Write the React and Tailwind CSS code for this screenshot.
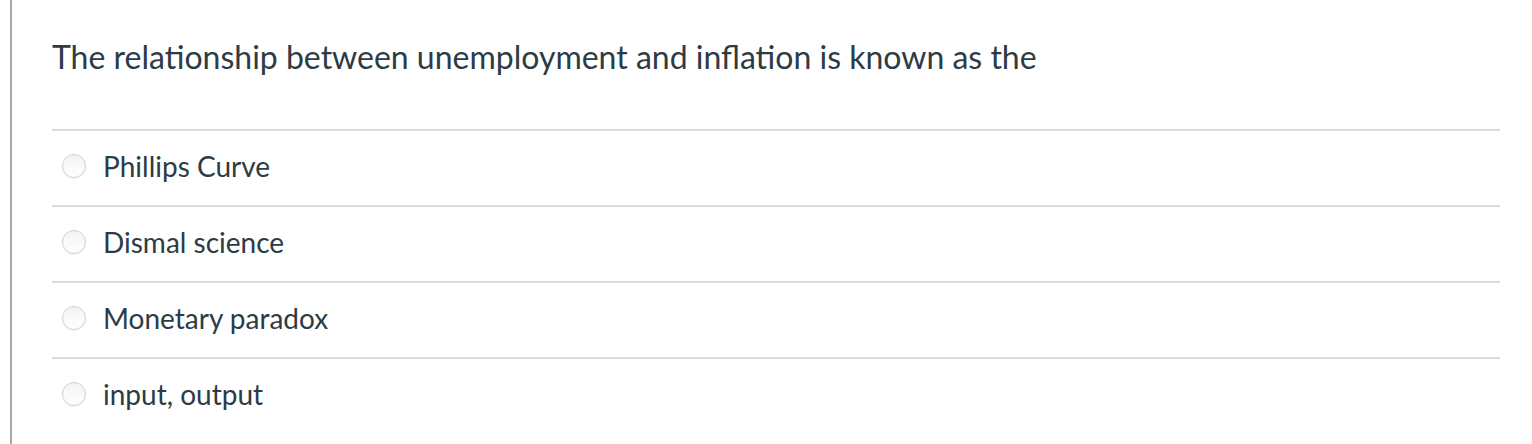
export default function App() {
  const options = ["Phillips Curve", "Dismal science", "Monetary paradox", "input, output"];
  return (
    <div className="flex h-[444px] w-[1532px] bg-white overflow-hidden" style={{ fontFamily: "Lato, 'Noto Sans', sans-serif" }}>
      <div className="ml-[10px] w-[2px] h-full bg-[#a8a8a8]" />
      <div className="ml-[40px] w-[1448px] flex flex-col">
        <div className="h-[129px] pt-[38px] text-[32px] leading-[1.2] text-[#2d3b45]">
          The relationship between unemployment and inflation is known as the
        </div>
        {options.map((o) => (
          <div key={o} className="h-[76px] shrink-0 border-t-2 border-[#dddddd] flex items-center pb-[5px]">
            <span className="ml-[10px] w-[24px] h-[24px] rounded-full border border-[#d0d0d0] bg-gradient-to-b from-[#f3f3f3] to-white shadow-[0_1px_1px_rgba(0,0,0,0.05)] shrink-0" />
            <span className="ml-[17px] text-[28px] text-[#2d3b45] leading-none">{o}</span>
          </div>
        ))}
      </div>
    </div>
  );
}
